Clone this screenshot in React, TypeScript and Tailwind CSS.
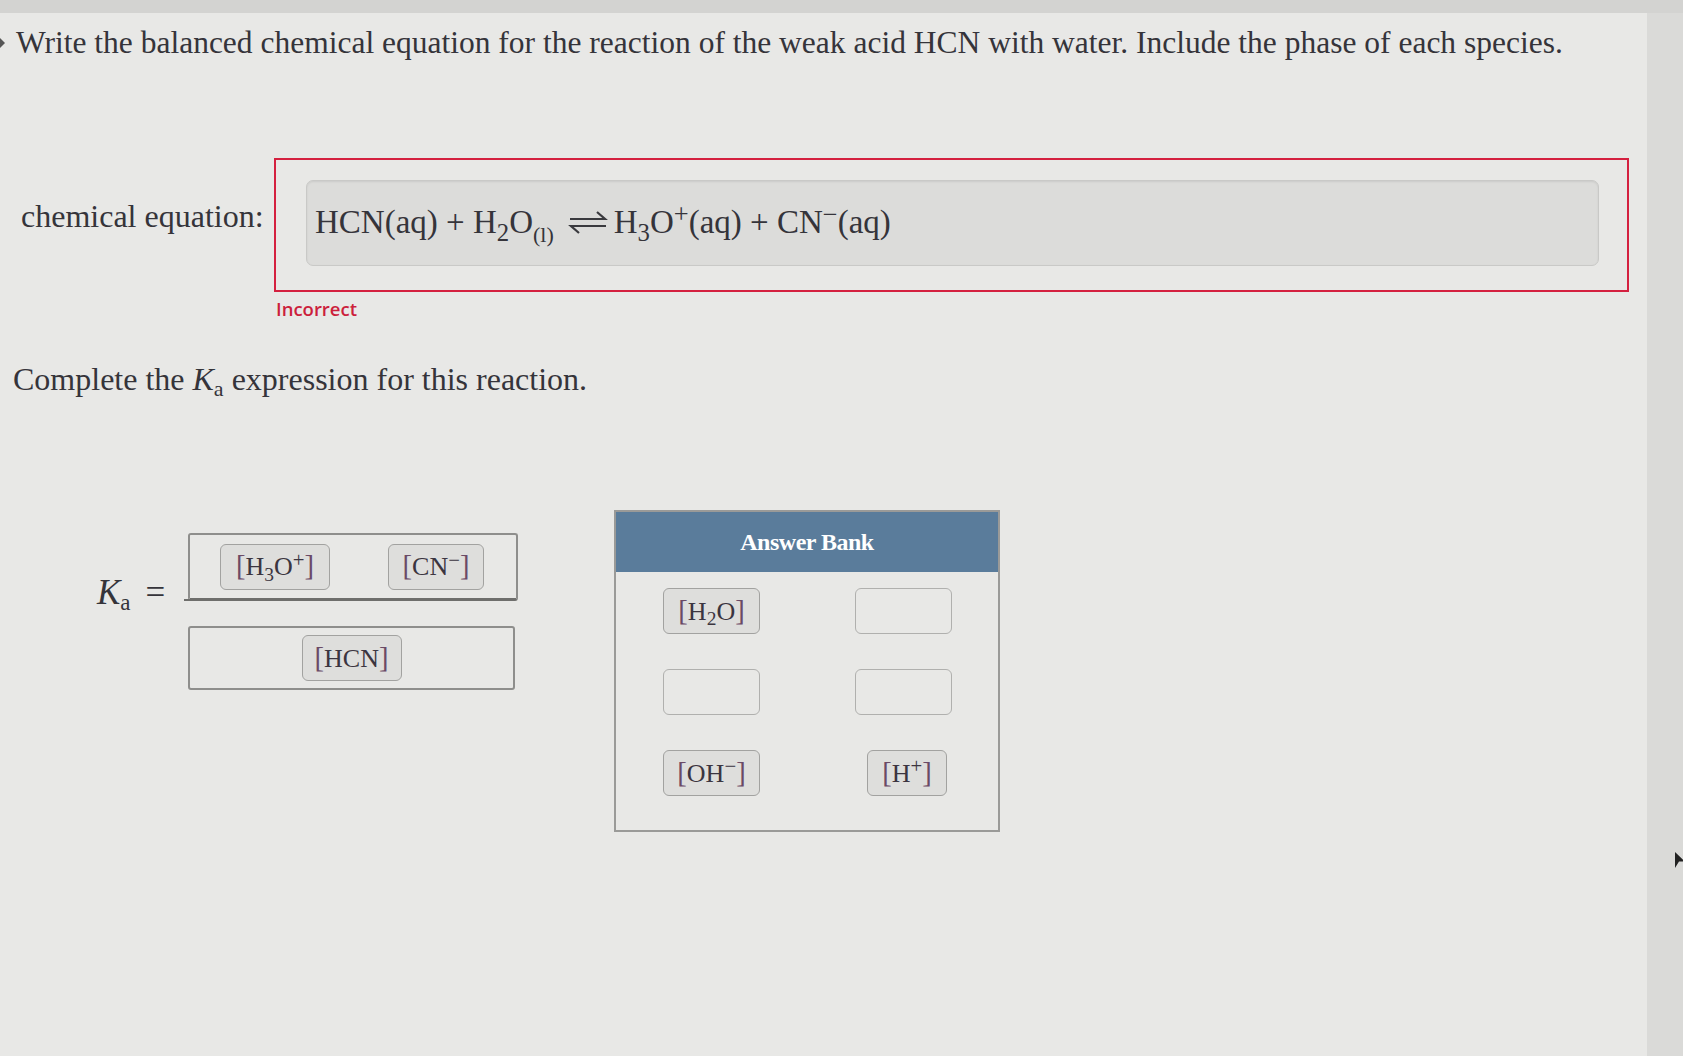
import React from "react";

const serif = { fontFamily: '"Liberation Serif", "Times New Roman", serif' };

function Chip({ children, w = "w-[97px]", empty = false }: { children?: React.ReactNode; w?: string; empty?: boolean }) {
  return (
    <div
      className={`${w} h-[46px] rounded-[6px] border-[1.5px] ${empty ? "border-[#b0b0ae] bg-transparent" : "border-[#a2a2a0] bg-[#dededc]"} flex items-center justify-center text-[26px] text-[#3b3540]`}
      style={serif}
    >
      {children ? <span className="leading-[30px]">{children}</span> : null}
    </div>
  );
}

const B = ({ c }: { c: string }) => <span className="text-[#6a4a66] text-[1.1em]">{c}</span>;
const Sb = ({ children }: { children: React.ReactNode }) => (
  <sub className="text-[0.75em] bottom-[-0.3em]">{children}</sub>
);
const Sp = ({ children }: { children: React.ReactNode }) => (
  <sup className="text-[0.8em] top-[-0.4em]">{children}</sup>
);

function Equilibrium() {
  return (
    <svg width="40" height="24" viewBox="0 0 40 24" className="ml-[14px] mr-[6px] -mt-[2px]">
      <path d="M2 9 H37 L29 2" fill="none" stroke="#3a3a3e" strokeWidth="2.2" />
      <path d="M38 16 H3 L11 23" fill="none" stroke="#3a3a3e" strokeWidth="2.2" />
    </svg>
  );
}

export default function App() {
  return (
    <div className="w-[1683px] h-[1056px] bg-[#dadad8] overflow-hidden relative">
      <div className="h-[13px] bg-[#d3d3d1]" />
      <div className="w-[1647px] h-[1043px] bg-[#e8e8e6] flex flex-col text-[#35343a]" style={serif}>
        <div className="pl-[16px] pt-[12px] text-[31.5px] leading-[36px] flex items-center">
          <span className="w-[5px] h-[10px] bg-[#555] -ml-[16px] mr-[11px] [clip-path:polygon(0_0,100%_50%,0_100%)]" />
          Write the balanced chemical equation for the reaction of the weak acid HCN with water. Include the phase of each species.
        </div>

        <div className="mt-[97px] flex items-center">
          <div className="pl-[21px] w-[274px] text-[32px] leading-[36px] -mt-[18px]">chemical equation:</div>
          <div className="w-[1355px] h-[134px] border-2 border-[#d4203f] pl-[30px] pr-[28px] flex items-center">
            <div className="w-full h-[86px] rounded-[7px] bg-[#dcdcda] border border-[#c9c9c7] shadow-[inset_0_1px_2px_rgba(0,0,0,0.08)] pl-[8px] flex items-center text-[33px] -mt-[4px]">
              <span>
                HCN(aq) + H<Sb>2</Sb>O<sub className="text-[22px] bottom-[-0.4em]">(l)</sub>
              </span>
              <Equilibrium />
              <span>
                H<Sb>3</Sb>O<Sp>+</Sp>(aq) + CN<Sp>−</Sp>(aq)
              </span>
            </div>
          </div>
        </div>

        <div className="ml-[276px] mt-[6px] text-[18.5px] leading-[22px] font-semibold text-[#cc1f3c]" style={{ fontFamily: '"Open Sans", "Liberation Sans", sans-serif' }}>
          Incorrect
        </div>

        <div className="ml-[13px] mt-[41px] text-[32px] leading-[36px]">
          Complete the <i>K</i>
          <sub className="text-[22px]">a</sub> expression for this reaction.
        </div>

        <div className="mt-[113px] flex items-start">
          <div className="ml-[97px] mt-[23px] flex items-start">
            <div className="w-[91px] h-[68px] text-[35px] leading-[32px]">
              <span className="mt-[44px] flex items-baseline">
                <i>K</i>
                <sub className="text-[23px]">a</sub>
                <span className="ml-[15px]">=</span>
              </span>
            </div>
            <div className="flex flex-col">
              <div className="relative w-[330px] h-[68px] border-2 border-[#8e8e8c] border-b-[3px] border-b-[#6e6e6c] rounded-[3px] flex items-center pl-[30px] gap-[58px]">
                <div className="absolute -left-[6px] -bottom-[3px] w-[8px] h-[2px] bg-[#6e6e6c]" />
                <Chip w="w-[110px]">
                  <B c="[" />H<Sb>3</Sb>O<Sp>+</Sp>
                  <B c="]" />
                </Chip>
                <Chip w="w-[96px]">
                  <B c="[" />CN<Sp>−</Sp>
                  <B c="]" />
                </Chip>
              </div>
              <div className="mt-[25px] w-[327px] h-[64px] border-2 border-[#8e8e8c] rounded-[3px] flex items-center justify-center">
                <Chip w="w-[100px]">
                  <B c="[" />HCN<B c="]" />
                </Chip>
              </div>
            </div>
          </div>

          <div className="ml-[96px] w-[386px] h-[322px] border-2 border-[#9a9a98] flex flex-col">
            <div className="h-[60px] bg-[#5a7c9b] flex items-center justify-center text-white text-[24px] font-bold tracking-[-0.5px]">
              Answer Bank
            </div>
            <div className="grid grid-cols-[192px_97px] pl-[47px] pt-[16px] gap-y-[35px]">
              <Chip>
                <B c="[" />H<Sb>2</Sb>O<B c="]" />
              </Chip>
              <Chip empty />
              <Chip empty />
              <Chip empty />
              <Chip>
                <B c="[" />OH<Sp>−</Sp>
                <B c="]" />
              </Chip>
              <div className="pl-[12px]">
                <Chip w="w-[80px]">
                  <B c="[" />H<Sp>+</Sp>
                  <B c="]" />
                </Chip>
              </div>
            </div>
          </div>
        </div>
      </div>
      <div className="absolute left-[1675px] top-[852px] w-[10px] h-[16px] bg-[#222] [clip-path:polygon(0_0,100%_60%,40%_60%,0_100%)]" />
    </div>
  );
}
